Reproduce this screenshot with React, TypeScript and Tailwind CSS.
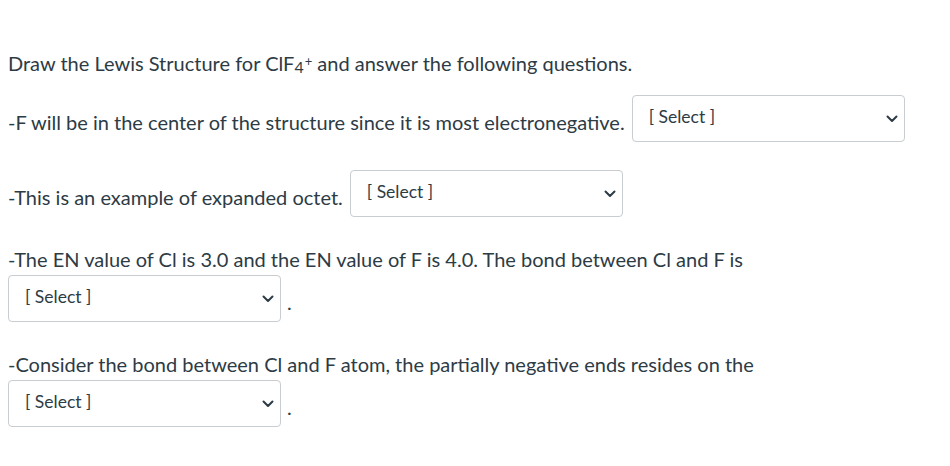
import * as React from "react";

function SelectBox() {
  return (
    <div className="w-[273px] h-[47px] shrink-0 rounded-[4px] border border-[#c7cdd1] bg-white flex items-start justify-between pl-[16px] pr-[6px] pt-[9px]">
      <span className="text-[17.5px] leading-[24px] text-[#2d3b45]">[ Select ]</span>
      <svg width="12" height="8" viewBox="0 0 12 8" className="mt-[10px]">
        <path d="M1.5 1.5 L6 6 L10.5 1.5" fill="none" stroke="#2d3b45" strokeWidth="2" strokeLinecap="round" strokeLinejoin="round" />
      </svg>
    </div>
  );
}

export default function App() {
  return (
    <div
      className="w-[950px] h-[466px] bg-white pl-[8px] pt-[50px] text-[20px] leading-[27px] text-[#2d3b45]"
      style={{ fontFamily: "Lato, 'Open Sans', sans-serif" }}
    >
      <p>
        Draw the Lewis Structure for ClF
        <sub className="text-[16px] relative -bottom-[2px]">4</sub>
        <sup className="text-[13px] relative -top-[5px] ml-[1px]">+</sup> and answer the following questions.
      </p>

      <div className="mt-[18px] flex items-start gap-[7px]">
        <span className="mt-[14px]">
          -F will be in the center of the structure since it is most electronegative.
        </span>
        <SelectBox />
      </div>

      <div className="mt-[28px] flex items-start gap-[7px]">
        <span className="mt-[14px]">-This is an example of expanded octet.</span>
        <SelectBox />
      </div>

      <p className="mt-[29px]">
        -The EN value of Cl is 3.0 and the EN value of F is 4.0. The bond between Cl and F is
      </p>
      <div className="mt-[2px] flex items-start gap-[6px]">
        <SelectBox />
        <span className="mt-[14px]">.</span>
      </div>

      <p className="mt-[29px]">
        -Consider the bond between Cl and F atom, the partially negative ends resides on the
      </p>
      <div className="mt-[2px] flex items-start gap-[6px]">
        <SelectBox />
        <span className="mt-[14px]">.</span>
      </div>
    </div>
  );
}
